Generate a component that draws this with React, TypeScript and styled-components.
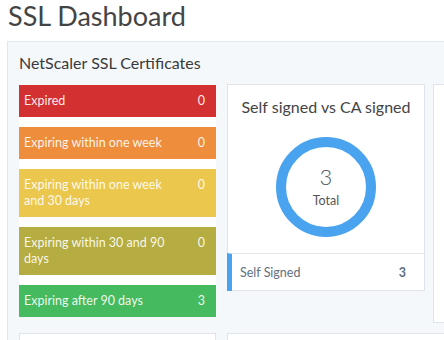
import React from 'react';
import styled, { createGlobalStyle } from 'styled-components';

const GlobalStyle = createGlobalStyle`
  html, body {
    margin: 0;
    padding: 0;
    background: #ffffff;
    font-family: "Lato", "Noto Sans", sans-serif;
  }
`;

const Page = styled.div`
  width: 444px;
  height: 340px;
  overflow: hidden;
`;

const Title = styled.h1`
  margin: 0 0 9px 8px;
  font-size: 27px;
  line-height: 32px;
  font-weight: 400;
  color: #444;
`;

const Panel = styled.section`
  margin-left: 7px;
  width: 640px;
  background: #f5f8fb;
  border: 1px solid #e2e7ed;
  padding: 0 11px 20px;
`;

const PanelTitle = styled.h2`
  margin: 0;
  padding: 11px 0;
  font-size: 16px;
  line-height: 20px;
  font-weight: 400;
  color: #3a3a3a;
`;

const Row = styled.div`
  display: flex;
  align-items: flex-start;
  gap: 11px;
  margin-bottom: 10px;
`;

const StatusList = styled.div`
  width: 197px;
  margin-top: 1px;
  background: #ffffff;
  display: flex;
  flex-direction: column;
  gap: 10px;
`;

const StatusBar = styled.div<{ $color: string }>`
  display: flex;
  justify-content: space-between;
  padding: 8px 11px 8px 5px;
  background: ${p => p.$color};
  color: rgba(255, 255, 255, 0.92);
  font-size: 12.5px;
  line-height: 16px;
`;

const StatusLabel = styled.span`
  flex: 1;
  padding-right: 30px;
`;

const Card = styled.div<{ $width?: number; $height?: number; $shift?: number }>`
  width: ${p => (p.$width ? `${p.$width}px` : 'auto')};
  height: ${p => (p.$height ? `${p.$height}px` : 'auto')};
  margin-left: ${p => p.$shift ?? 0}px;
  background: #ffffff;
  border: 1px solid #dfe4ea;
  box-sizing: border-box;
  display: flex;
  flex-direction: column;
`;

const CardTitle = styled.div`
  padding-top: 12px;
  text-align: center;
  font-size: 16px;
  line-height: 20px;
  color: #444;
`;

const Donut = styled.div`
  position: relative;
  width: 100px;
  height: 100px;
  margin: 20px auto 16px;
`;

const DonutLabel = styled.div`
  position: absolute;
  inset: 0;
  display: flex;
  flex-direction: column;
  align-items: center;
  justify-content: center;
  color: #555b66;
`;

const DonutValue = styled.div`
  font-size: 22px;
  font-weight: 300;
  line-height: 22px;
  margin-top: 2px;
`;

const DonutCaption = styled.div`
  margin-top: 4px;
  font-size: 12.5px;
  line-height: 18px;
  color: #555;
`;

const LegendRow = styled.div`
  display: flex;
  justify-content: space-between;
  align-items: center;
  height: 38px;
  border-top: 1px solid #e3e8ee;
  border-left: 5px solid #4aa3ef;
  margin-left: -1px;
  margin-bottom: -1px;
  padding: 0 18px 0 8px;
  font-size: 12.5px;
  color: #5f6f80;
`;

const LegendValue = styled.span`
  font-weight: 700;
  color: #5a7080;
`;

const statuses = [
  { label: 'Expired', count: 0, color: '#d33131' },
  { label: 'Expiring within one week', count: 0, color: '#ee8d3b' },
  { label: 'Expiring within one week and 30 days', count: 0, color: '#ebc74e' },
  { label: 'Expiring within 30 and 90 days', count: 0, color: '#b5ad41' },
  { label: 'Expiring after 90 days', count: 3, color: '#46ba5e' },
];

const App: React.FC = () => {
  return (
    <Page>
      <GlobalStyle />
      <Title>SSL Dashboard</Title>
      <Panel>
        <PanelTitle>NetScaler SSL Certificates</PanelTitle>
        <Row>
          <StatusList>
            {statuses.map(s => (
              <StatusBar key={s.label} $color={s.color}>
                <StatusLabel>{s.label}</StatusLabel>
                <span>{s.count}</span>
              </StatusBar>
            ))}
          </StatusList>
          <Card $width={198} $height={207}>
            <CardTitle>Self signed vs CA signed</CardTitle>
            <Donut>
              <svg width="100" height="100" viewBox="0 0 100 100">
                <circle cx="50" cy="50" r="45" fill="none" stroke="#4aa3ef" strokeWidth="10" />
              </svg>
              <DonutLabel>
                <DonutValue>3</DonutValue>
                <DonutCaption>Total</DonutCaption>
              </DonutLabel>
            </Donut>
            <LegendRow>
              <span>Self Signed</span>
              <LegendValue>3</LegendValue>
            </LegendRow>
          </Card>
          <Card $width={198} $height={239} $shift={-3} />
        </Row>
        <Row>
          <Card $width={197} $height={60} />
          <Card $width={400} $height={60} />
        </Row>
      </Panel>
    </Page>
  );
};

export default App;
